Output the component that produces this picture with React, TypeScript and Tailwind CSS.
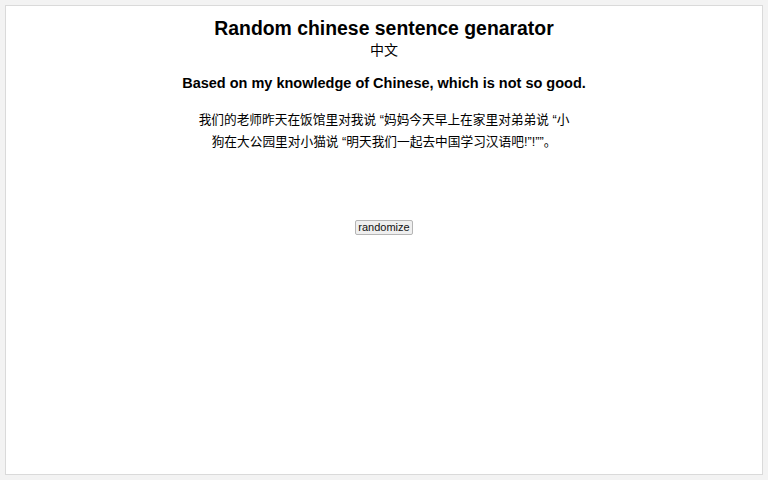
const sans = "font-['Liberation_Sans','Noto_Sans_CJK_SC',sans-serif]";

export default function App() {
  return (
    <div className={`min-h-screen bg-[#f3f3f3] p-[5px] text-black ${sans}`}>
      <div className="flex h-[470px] flex-col items-center border border-[#dadada] bg-white pt-[10px]">
        <h1 className="text-[19.4px] font-bold leading-6">Random chinese sentence genarator</h1>
        <p className="text-[14px] leading-5">中文</p>

        <h2 className="mt-[13px] text-[14.5px] font-bold leading-5">
          Based on my knowledge of Chinese, which is not so good.
        </h2>

        {/* generated sentence, nested quotes */}
        <p className="mt-4 text-center text-[12.7px] leading-[22px]">
          我们的老师昨天在饭馆里对我说 “妈妈今天早上在家里对弟弟说 “小
          <br />
          狗在大公园里对小猫说 “明天我们一起去中国学习汉语吧!”!””。
        </p>

        <button
          type="button"
          className="mt-[67px] rounded-[2px] border border-[#b5b5b5] bg-[#efefef] px-[2px] text-[11px] leading-[13px] text-[#111]"
        >
          randomize
        </button>
      </div>
    </div>
  );
}
